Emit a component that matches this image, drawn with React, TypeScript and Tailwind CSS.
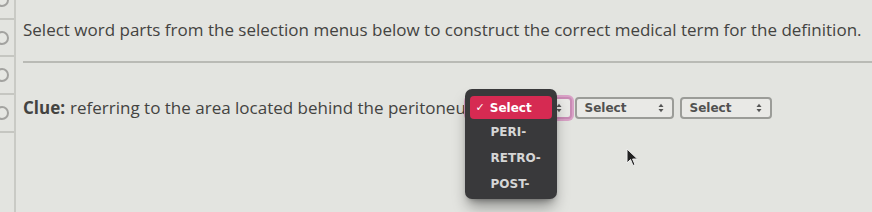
import React from "react";

function Circle() {
  return <div className="w-[14px] h-[14px] rounded-full border-2 border-[#a3a3a0] ml-[-5px] bg-[#e6e7e3]" />;
}

function Arrows() {
  return (
    <svg width="6" height="10" viewBox="0 0 6 10" className="shrink-0">
      <path d="M0.5 4 L3 0.8 L5.5 4 Z" fill="#555" />
      <path d="M0.5 6 L3 9.2 L5.5 6 Z" fill="#555" />
    </svg>
  );
}

function SelectBox({ w, focus }: { w: string; focus?: boolean }) {
  return (
    <div
      className={`${w} h-[22px] rounded-[4px] border-2 ${focus ? "border-[#c98bb5] ring-2 ring-[#d9a1c6]" : "border-[#9b9c98]"} bg-[#e9e9e6] flex items-center justify-between pl-[8px] pr-[8px] shrink-0`}
    >
      <span className="text-[12px] font-bold text-[#515150] leading-none" style={{ fontFamily: '"DejaVu Sans", sans-serif' }}>Select</span>
      <Arrows />
    </div>
  );
}

export default function App() {
  return (
    <div
      className="w-[872px] h-[212px] bg-[#e3e4e0] flex overflow-hidden relative"
      style={{ fontFamily: '"Open Sans", sans-serif' }}
    >
      <div className="w-[16px] shrink-0 border-r-2 border-[#c9cac5] flex flex-col overflow-hidden">
        <div className="h-[20px] border-b-2 border-[#c5c6c1] flex items-start overflow-hidden shrink-0">
          <div className="mt-[-7px]"><Circle /></div>
        </div>
        <div className="h-[37px] border-b-2 border-[#c5c6c1] flex items-center shrink-0"><Circle /></div>
        <div className="h-[38px] border-b-2 border-[#c5c6c1] flex items-center shrink-0"><Circle /></div>
        <div className="h-[38px] border-b-2 border-[#c5c6c1] flex items-center shrink-0"><Circle /></div>
      </div>
      <div className="flex-1 pl-[7px] flex flex-col">
        <div className="pt-[18px] text-[17px] leading-[24px] text-[#434341] whitespace-nowrap">
          Select word parts from the selection menus below to construct the correct medical term for the definition.
        </div>
        <div className="mt-[19px] h-[2px] bg-[#b9bab5] mr-[-8px]" />
        <div className="mt-[33px] flex items-center whitespace-nowrap text-[17px] leading-[24px] text-[#434341]">
          <span className="font-bold">Clue:</span>
          <span className="ml-[5px]">referring to the area located behind the peritoneum</span>
          <div className="relative ml-[-16px] z-0">
            <SelectBox w="w-[106px]" focus />
            <div className="absolute left-[-1px] top-[-8px] w-[92px] h-[110px] rounded-[7px] bg-[#39393b] shadow-lg shadow-black/40 pt-[7px] px-[5px] z-10" style={{ fontFamily: '"DejaVu Sans", sans-serif' }}>
              <div className="h-[23px] rounded-[4px] bg-[#d62a52] flex items-center pl-[6px] text-white text-[12px] font-bold leading-none">
                <span className="text-[11px] font-normal mr-[5px]">✓</span>Select
              </div>
              <div className="pl-[21px] mt-[5px] flex flex-col gap-[10px] text-[12px] font-bold text-[#d6d6d6] leading-[16px]">
                <span>PERI-</span>
                <span>RETRO-</span>
                <span>POST-</span>
              </div>
            </div>
          </div>
          <div className="ml-[3px]"><SelectBox w="w-[99px]" /></div>
          <div className="ml-[6px]"><SelectBox w="w-[92px]" /></div>
        </div>
      </div>
      <svg className="absolute left-[626px] top-[148px]" width="14" height="20" viewBox="0 0 14 20">
        <path d="M1 1 L1 15 L4.5 11.5 L7 17.5 L9 16.6 L6.6 11 L11.5 11 Z" fill="#222" stroke="#eee" strokeWidth="1" />
      </svg>
    </div>
  );
}
